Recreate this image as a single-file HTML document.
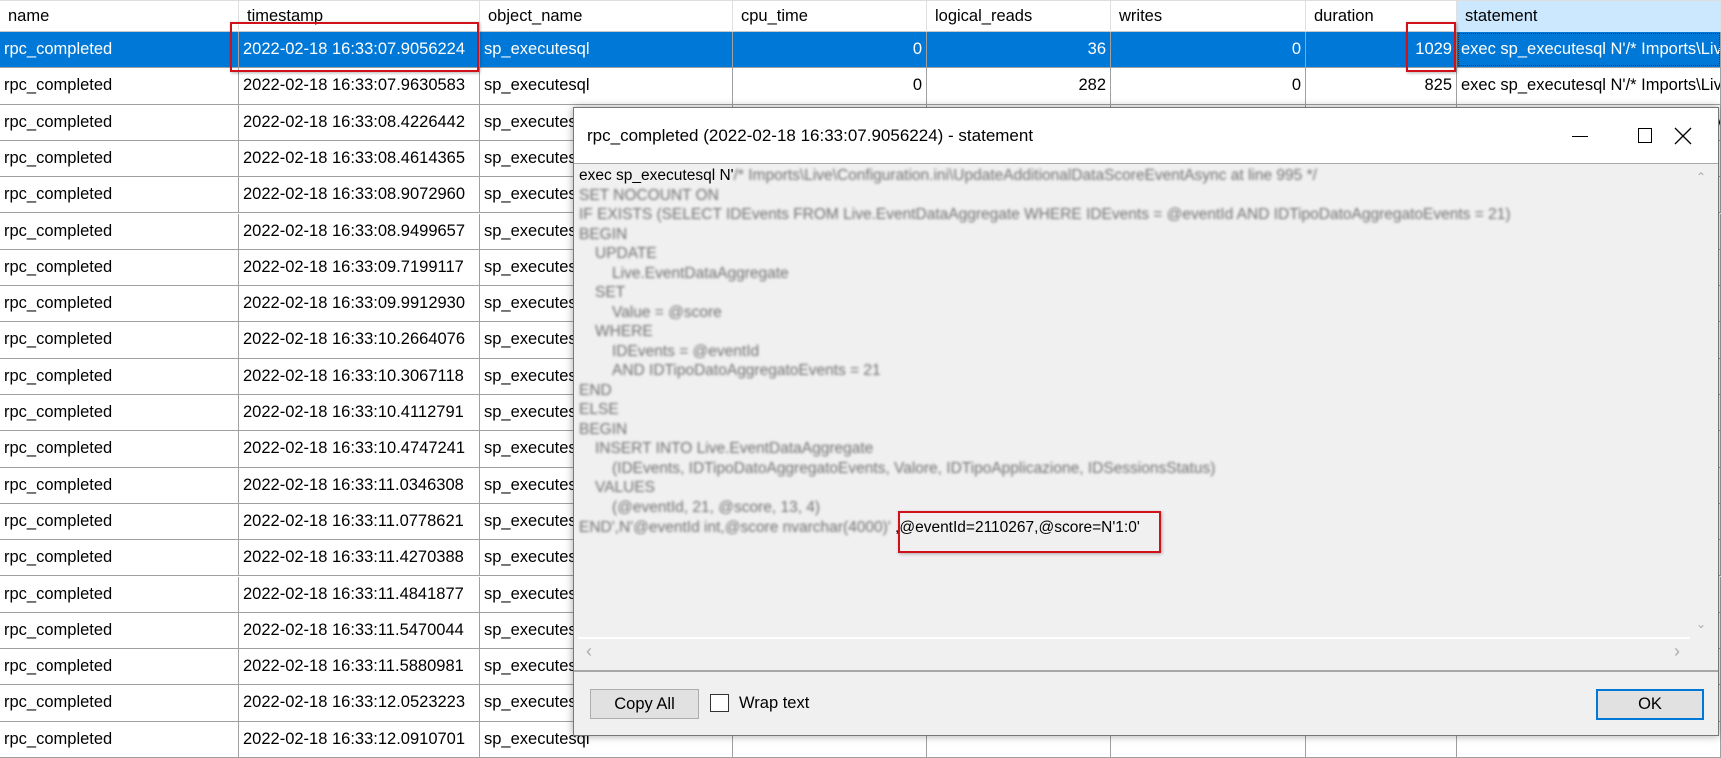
<!DOCTYPE html>
<html><head><meta charset="utf-8"><style>
*{box-sizing:border-box;margin:0;padding:0}
body{width:1721px;height:736px;overflow:hidden;background:#fff;font-family:"Liberation Sans",sans-serif;font-size:16.5px;color:#000;position:relative}
.hdr{position:absolute;left:0;top:0;height:32px;width:1721px;border-bottom:1px solid #c8c8c8;display:flex;border-top:1px solid #ddd}
.hdr div{height:31px;line-height:31px;padding-left:8px;border-right:1px solid #e0e0e0;white-space:nowrap;overflow:hidden}
.row{position:absolute;left:0;height:36.3px;width:1721px;display:flex;border-bottom:1px solid #a0a0a0}
.row div{line-height:35px;padding:0 4px;border-right:1px solid #a0a0a0;white-space:nowrap;overflow:hidden}
.row .n{text-align:right}
.sel{background:#0078d7;color:#fff}
.c1{width:239px}.c2{width:241px}.c3{width:253px}.c4{width:194px}.c5{width:184px}.c6{width:195px}.c7{width:151px}.c8{width:264px}
.red{position:absolute;border:2px solid #d0101a;box-shadow:1px 1px 3px rgba(0,0,0,.3)}
.dlg{position:absolute;left:573px;top:107px;width:1146px;height:629px;background:#f0f0f0;border:1px solid #777;box-shadow:0 0 8px rgba(0,0,0,.35)}
.title{position:absolute;left:0;top:0;width:100%;height:56px;background:#fff;border-bottom:1px solid #aaa}
.title span{position:absolute;left:13px;top:18px;font-size:17px}
.ta{position:absolute;left:4px;top:56px;width:1138px;height:503px;background:#f0f0f0}
.ln{position:absolute;font-size:15.5px;white-space:pre;line-height:19px}
.bl{color:#707070;filter:blur(1.3px)}
</style></head><body>
<div class="hdr"><div class="c1">name</div><div class="c2">timestamp</div><div class="c3">object_name</div><div class="c4">cpu_time</div><div class="c5">logical_reads</div><div class="c6">writes</div><div class="c7">duration</div><div class="c8" style="background:#cce8ff">statement</div></div>

<div class="row sel" style="top:32px"><div class="c1">rpc_completed</div><div class="c2">2022-02-18 16:33:07.9056224</div><div class="c3">sp_executesql</div><div class="c4 n">0</div><div class="c5 n">36</div><div class="c6 n">0</div><div class="c7 n">1029</div><div class="c8" style="outline:1px dotted #333;outline-offset:-2px">exec sp_executesql N'/* Imports\Live</div></div>
<div class="row" style="top:68.3px"><div class="c1">rpc_completed</div><div class="c2">2022-02-18 16:33:07.9630583</div><div class="c3">sp_executesql</div><div class="c4 n">0</div><div class="c5 n">282</div><div class="c6 n">0</div><div class="c7 n">825</div><div class="c8">exec sp_executesql N'/* Imports\Live</div></div>
<div class="row" style="top:104.6px"><div class="c1">rpc_completed</div><div class="c2">2022-02-18 16:33:08.4226442</div><div class="c3">sp_executesql</div><div class="c4 n">0</div><div class="c5 n">0</div><div class="c6 n">0</div><div class="c7 n">1110</div><div class="c8">exec sp_executesql N'/* Imports\Live</div></div>
<div class="row" style="top:140.9px"><div class="c1">rpc_completed</div><div class="c2">2022-02-18 16:33:08.4614365</div><div class="c3">sp_executesql</div><div class="c4"></div><div class="c5"></div><div class="c6"></div><div class="c7"></div><div class="c8"></div></div>
<div class="row" style="top:177.2px"><div class="c1">rpc_completed</div><div class="c2">2022-02-18 16:33:08.9072960</div><div class="c3">sp_executesql</div><div class="c4"></div><div class="c5"></div><div class="c6"></div><div class="c7"></div><div class="c8"></div></div>
<div class="row" style="top:213.5px"><div class="c1">rpc_completed</div><div class="c2">2022-02-18 16:33:08.9499657</div><div class="c3">sp_executesql</div><div class="c4"></div><div class="c5"></div><div class="c6"></div><div class="c7"></div><div class="c8"></div></div>
<div class="row" style="top:249.8px"><div class="c1">rpc_completed</div><div class="c2">2022-02-18 16:33:09.7199117</div><div class="c3">sp_executesql</div><div class="c4"></div><div class="c5"></div><div class="c6"></div><div class="c7"></div><div class="c8"></div></div>
<div class="row" style="top:286.1px"><div class="c1">rpc_completed</div><div class="c2">2022-02-18 16:33:09.9912930</div><div class="c3">sp_executesql</div><div class="c4"></div><div class="c5"></div><div class="c6"></div><div class="c7"></div><div class="c8"></div></div>
<div class="row" style="top:322.4px"><div class="c1">rpc_completed</div><div class="c2">2022-02-18 16:33:10.2664076</div><div class="c3">sp_executesql</div><div class="c4"></div><div class="c5"></div><div class="c6"></div><div class="c7"></div><div class="c8"></div></div>
<div class="row" style="top:358.7px"><div class="c1">rpc_completed</div><div class="c2">2022-02-18 16:33:10.3067118</div><div class="c3">sp_executesql</div><div class="c4"></div><div class="c5"></div><div class="c6"></div><div class="c7"></div><div class="c8"></div></div>
<div class="row" style="top:395px"><div class="c1">rpc_completed</div><div class="c2">2022-02-18 16:33:10.4112791</div><div class="c3">sp_executesql</div><div class="c4"></div><div class="c5"></div><div class="c6"></div><div class="c7"></div><div class="c8"></div></div>
<div class="row" style="top:431.3px"><div class="c1">rpc_completed</div><div class="c2">2022-02-18 16:33:10.4747241</div><div class="c3">sp_executesql</div><div class="c4"></div><div class="c5"></div><div class="c6"></div><div class="c7"></div><div class="c8"></div></div>
<div class="row" style="top:467.6px"><div class="c1">rpc_completed</div><div class="c2">2022-02-18 16:33:11.0346308</div><div class="c3">sp_executesql</div><div class="c4"></div><div class="c5"></div><div class="c6"></div><div class="c7"></div><div class="c8"></div></div>
<div class="row" style="top:503.9px"><div class="c1">rpc_completed</div><div class="c2">2022-02-18 16:33:11.0778621</div><div class="c3">sp_executesql</div><div class="c4"></div><div class="c5"></div><div class="c6"></div><div class="c7"></div><div class="c8"></div></div>
<div class="row" style="top:540.2px"><div class="c1">rpc_completed</div><div class="c2">2022-02-18 16:33:11.4270388</div><div class="c3">sp_executesql</div><div class="c4"></div><div class="c5"></div><div class="c6"></div><div class="c7"></div><div class="c8"></div></div>
<div class="row" style="top:576.5px"><div class="c1">rpc_completed</div><div class="c2">2022-02-18 16:33:11.4841877</div><div class="c3">sp_executesql</div><div class="c4"></div><div class="c5"></div><div class="c6"></div><div class="c7"></div><div class="c8"></div></div>
<div class="row" style="top:612.8px"><div class="c1">rpc_completed</div><div class="c2">2022-02-18 16:33:11.5470044</div><div class="c3">sp_executesql</div><div class="c4"></div><div class="c5"></div><div class="c6"></div><div class="c7"></div><div class="c8"></div></div>
<div class="row" style="top:649.1px"><div class="c1">rpc_completed</div><div class="c2">2022-02-18 16:33:11.5880981</div><div class="c3">sp_executesql</div><div class="c4"></div><div class="c5"></div><div class="c6"></div><div class="c7"></div><div class="c8"></div></div>
<div class="row" style="top:685.4px"><div class="c1">rpc_completed</div><div class="c2">2022-02-18 16:33:12.0523223</div><div class="c3">sp_executesql</div><div class="c4"></div><div class="c5"></div><div class="c6"></div><div class="c7"></div><div class="c8"></div></div>
<div class="row" style="top:721.7px"><div class="c1">rpc_completed</div><div class="c2">2022-02-18 16:33:12.0910701</div><div class="c3">sp_executesql</div><div class="c4"></div><div class="c5"></div><div class="c6"></div><div class="c7"></div><div class="c8"></div></div>

<div class="red" style="left:230px;top:22px;width:249px;height:50px"></div>
<div class="red" style="left:1406px;top:22px;width:50px;height:50px"></div>

<div class="dlg">
 <div class="title"><span>rpc_completed (2022-02-18 16:33:07.9056224) - statement</span>
  <div style="position:absolute;left:998px;top:28px;width:16px;height:1px;background:#000"></div>
  <div style="position:absolute;left:1064px;top:20px;width:14px;height:15px;border:1px solid #000"></div>
  <svg style="position:absolute;left:1100px;top:19px" width="18" height="18"><path d="M1 1L17 17M17 1L1 17" stroke="#000" stroke-width="1.3"/></svg>
 </div>
 <div class="ta">
  <div class="ln" style="left:1px;top:2px">exec sp_executesql N'<span class="bl">/* Imports\Live\Configuration.ini\UpdateAdditionalDataScoreEventAsync at line 995 */</span></div>
  <div class="ln bl" style="left:1px;top:22px">SET NOCOUNT ON</div>
  <div class="ln bl" style="left:1px;top:41px">IF EXISTS (SELECT IDEvents FROM Live.EventDataAggregate WHERE IDEvents = @eventId AND IDTipoDatoAggregatoEvents = 21)</div>
  <div class="ln bl" style="left:1px;top:61px">BEGIN</div>
  <div class="ln bl" style="left:17px;top:80px">UPDATE</div>
  <div class="ln bl" style="left:34px;top:100px">Live.EventDataAggregate</div>
  <div class="ln bl" style="left:17px;top:119px">SET</div>
  <div class="ln bl" style="left:34px;top:139px">Value = @score</div>
  <div class="ln bl" style="left:17px;top:158px">WHERE</div>
  <div class="ln bl" style="left:34px;top:178px">IDEvents = @eventId</div>
  <div class="ln bl" style="left:34px;top:197px">AND IDTipoDatoAggregatoEvents = 21</div>
  <div class="ln bl" style="left:1px;top:217px">END</div>
  <div class="ln bl" style="left:1px;top:236px">ELSE</div>
  <div class="ln bl" style="left:1px;top:256px">BEGIN</div>
  <div class="ln bl" style="left:17px;top:275px">INSERT INTO Live.EventDataAggregate</div>
  <div class="ln bl" style="left:34px;top:295px">(IDEvents, IDTipoDatoAggregatoEvents, Valore, IDTipoApplicazione, IDSessionsStatus)</div>
  <div class="ln bl" style="left:17px;top:314px">VALUES</div>
  <div class="ln bl" style="left:34px;top:334px">(@eventId, 21, @score, 13, 4)</div>
  <div class="ln" style="left:1px;top:354px"><span class="bl">END',N'@eventId int,@score nvarchar(4000)' </span>,@eventId=2110267,@score=N'1:0'</div>
  <div style="position:absolute;right:4px;top:0;width:22px;height:473px;background:#f0f0f0;color:#aaa;font-size:12px;text-align:center">
   <div style="margin-top:6px">&#8963;</div><div style="position:absolute;bottom:6px;width:22px">&#8964;</div></div>
  <div style="position:absolute;left:0;top:473px;width:1112px;height:26px;border-top:2px solid #fff;color:#aaa;font-size:18px;line-height:24px"><span style="margin-left:8px">&#8249;</span><span style="position:absolute;right:10px">&#8250;</span></div>
 </div>
 <div style="position:absolute;left:0;top:562px;width:100%;height:2px;background:#a8a8a8"></div>
 <div style="position:absolute;left:16px;top:581px;width:109px;height:30px;background:#e1e1e1;border:1px solid #adadad;text-align:center;line-height:28px">Copy All</div>
 <div style="position:absolute;left:136px;top:586px;width:19px;height:18px;background:#fff;border:1px solid #333"></div>
 <div style="position:absolute;left:165px;top:586px;line-height:18px">Wrap text</div>
 <div style="position:absolute;left:1022px;top:581px;width:108px;height:31px;background:#e1e1e1;border:2px solid #0078d7;text-align:center;line-height:27px">OK</div>
</div>
<div class="red" style="left:898px;top:511px;width:263px;height:42px"></div>
</body></html>
